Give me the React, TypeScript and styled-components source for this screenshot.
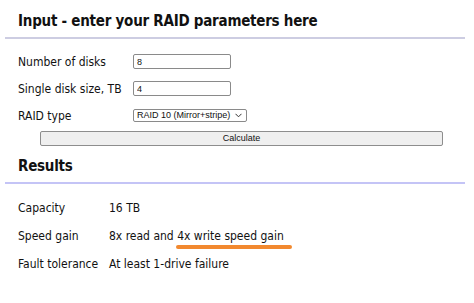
import React from "react";
import styled, { createGlobalStyle } from "styled-components";

const Global = createGlobalStyle`
  html, body { margin: 0; padding: 0; background: #ffffff; }
  body {
    font-family: "DejaVu Sans Condensed", "DejaVu Sans", Verdana, sans-serif;
    color: #111111;
  }
`;

const Page = styled.div`
  width: 474px;
  height: 303px;
  overflow: hidden;
`;

const Heading = styled.h2<{ $line: string }>`
  margin: ${(p) => (p.$line === "a" ? "11px" : "10px")} 9px 0 5px;
  padding: 0 0 6px 13px;
  font-family: "DejaVu Sans Condensed", "DejaVu Sans", Verdana, sans-serif;
  font-weight: bold;
  font-size: 15px;
  letter-spacing: -0.25px;
  line-height: 20px;
  border-bottom: 2px solid ${(p) => (p.$line === "a" ? "#cdcde2" : "#c4c4f6")};
`;

const Form = styled.div`
  margin-top: 9px;
  display: grid;
  grid-template-columns: 115px auto;
  grid-auto-rows: 27px;
  align-items: center;
  padding-left: 18px;
`;

const Label = styled.label`
  font-size: 12px;
  line-height: 16px;
  white-space: nowrap;
`;

const TextInput = styled.input`
  display: block;
  box-sizing: border-box;
  width: 98px;
  height: 15px;
  padding: 0 3px;
  border: 1px solid #8a8a8a;
  border-radius: 2px;
  font-family: "Liberation Sans", Arial, sans-serif;
  font-size: 9px;
  color: #111;
  outline: none;
`;

const SelectWrap = styled.div`
  position: relative;
  width: 114px;
  height: 13px;
`;

const Select = styled.select`
  display: block;
  box-sizing: border-box;
  appearance: none;
  -webkit-appearance: none;
  width: 114px;
  height: 13px;
  padding: 0 0 0 3px;
  border: 1px solid #8a8a8a;
  border-radius: 2px;
  background: #ffffff;
  font-family: "Liberation Sans", Arial, sans-serif;
  font-size: 9px;
  line-height: 11px;
  color: #111;
  outline: none;
`;

const Chevron = styled.svg`
  position: absolute;
  right: 5px;
  top: 4px;
  pointer-events: none;
`;

const Button = styled.button`
  display: block;
  box-sizing: border-box;
  margin: 2px 0 0 40px;
  width: 403px;
  height: 15px;
  padding: 0;
  border: 1px solid #8d8d8d;
  border-radius: 2px;
  background: #efefef;
  font-family: "Liberation Sans", Arial, sans-serif;
  font-size: 9px;
  line-height: 13px;
  color: #111;
`;

const Results = styled.div`
  margin-top: 10px;
  display: grid;
  grid-template-columns: 91px auto;
  grid-auto-rows: 28px;
  align-items: center;
  padding-left: 18px;
  font-size: 12px;
  line-height: 16px;
`;

const Value = styled.span`
  white-space: nowrap;
`;

const Marked = styled.span`
  position: relative;
`;

const Underline = styled.span`
  position: absolute;
  left: -1px;
  right: -8px;
  top: 16px;
  height: 4px;
  border-radius: 2px;
  background: #f2892f;
`;

export default function App() {
  return (
    <Page>
      <Global />
      <Heading $line="a">Input - enter your RAID parameters here</Heading>
      <Form>
        <Label>Number of disks</Label>
        <div><TextInput defaultValue="8" /></div>
        <Label>Single disk size, TB</Label>
        <div><TextInput defaultValue="4" /></div>
        <Label>RAID type</Label>
        <SelectWrap>
          <Select defaultValue="10">
            <option value="10">RAID 10 (Mirror+stripe)</option>
          </Select>
          <Chevron width="7" height="5" viewBox="0 0 7 5">
            <path d="M0.5 0.8 L3.5 3.8 L6.5 0.8" fill="none" stroke="#333" strokeWidth="1" />
          </Chevron>
        </SelectWrap>
      </Form>
      <Button>Calculate</Button>
      <Heading $line="b">Results</Heading>
      <Results>
        <span>Capacity</span>
        <Value>16 TB</Value>
        <span>Speed gain</span>
        <Value>
          8x read and <Marked>4x write speed gain<Underline /></Marked>
        </Value>
        <span>Fault tolerance</span>
        <Value>At least 1-drive failure</Value>
      </Results>
    </Page>
  );
}
